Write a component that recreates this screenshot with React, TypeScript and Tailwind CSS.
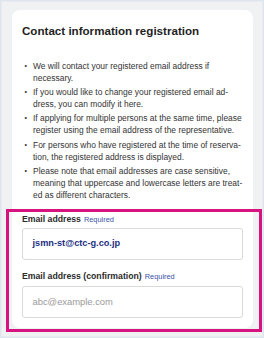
export default function App() {
  const notes = [
    "We will contact your registered email address if necessary.",
    "If you would like to change your registered email ad\u00ADdress, you can modify it here.",
    "If applying for multiple persons at the same time, please register using the email address of the representative.",
    "For persons who have registered at the time of reserva\u00ADtion, the registered address is displayed.",
    "Please note that email addresses are case sensitive, meaning that uppercase and lowercase letters are treat\u00ADed as different characters.",
  ];

  return (
    <div className="relative w-[264px] h-[338px] overflow-hidden bg-[#eff1f3] shadow-[inset_0_0_0_1.5px_#dfe5ec] pl-[12px] pr-[11px] pt-[10px] font-['Liberation_Sans',Arial,sans-serif]">
      {/* Card */}
      <div className="bg-white rounded-[8px] px-[10px] pt-[14px] pb-[10px]">
        <h1 className="text-[11.6px] leading-[14px] font-bold text-[#1f1f1f]">Contact information registration</h1>

        <ul className="mt-[22px] flex flex-col gap-[2.2px] text-[8.45px] leading-[12px] text-[#333]">
          {notes.map((n, i) => (
            <li key={i} className="flex">
              <span className="w-[11px] shrink-0 pl-[2.5px] text-[7px]">•</span>
              <span className="flex-1">{n}</span>
            </li>
          ))}
        </ul>

        {/* Email address */}
        <div className="mt-[13px] flex items-baseline gap-[3px] leading-[11px]">
          <span className="text-[8.7px] font-bold text-[#2b2b2b]">Email address</span>
          <span className="text-[7.4px] text-[#3550a8]">Required</span>
        </div>
        <div className="mt-[3.5px] h-[32px] rounded-[3px] border border-[#d9d9d9] flex items-center px-[9.5px]">
          <span className="text-[9.2px] font-bold text-[#1e2f82]">jsmn-st@ctc-g.co.jp</span>
        </div>

        {/* Email address (confirmation) */}
        <div className="mt-[11px] flex items-baseline gap-[3px] leading-[11px]">
          <span className="text-[8.7px] font-bold text-[#2b2b2b]">Email address (confirmation)</span>
          <span className="text-[7.4px] text-[#3550a8]">Required</span>
        </div>
        <div className="mt-[3.5px] h-[32px] rounded-[3px] border border-[#d9d9d9] flex items-center px-[9.5px]">
          <span className="text-[9.4px] text-[#9a9a9a]">abc@example.com</span>
        </div>
      </div>

      {/* Highlight overlay */}
      <div className="absolute left-[6px] top-[209px] w-[256px] h-[123px] border-[3px] border-[#d6137f] pointer-events-none" />
    </div>
  );
}
